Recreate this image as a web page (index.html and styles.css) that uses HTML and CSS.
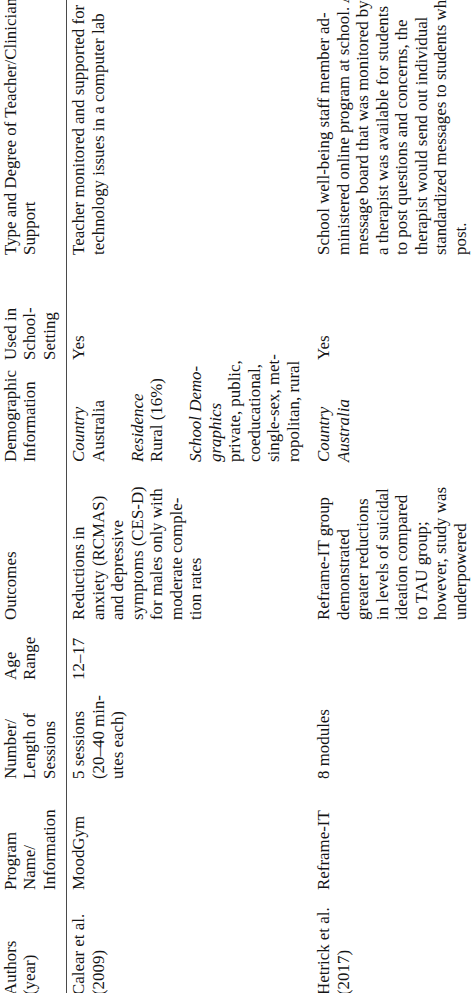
FILE: index.html
```html
<!DOCTYPE html>
<html lang="en">
<head>
<meta charset="utf-8">
<title>Table</title>
<link rel="stylesheet" href="styles.css">
</head>
<body>
<div class="page">
  <div class="sheet">
    <div class="tbl">
      <div class="th">Authors<br>(year)</div>
      <div class="th">Program<br>Name/<br>Information</div>
      <div class="th">Number/<br>Length of<br>Sessions</div>
      <div class="th">Age<br>Range</div>
      <div class="th">Outcomes</div>
      <div class="th">Demographic<br>Information</div>
      <div class="th">Used in<br>School-<br>Setting</div>
      <div class="th">Type and Degree of Teacher/Clinician<br>Support</div>

      <div class="td r1">Calear et al.<br>(2009)</div>
      <div class="td r1">MoodGym</div>
      <div class="td r1">5 sessions<br>(20–40 min-<br>utes each)</div>
      <div class="td r1">12–17</div>
      <div class="td r1">Reductions in<br>anxiety (RCMAS)<br>and depressive<br>symptoms (CES-D)<br>for males only with<br>moderate comple-<br>tion rates</div>
      <div class="td r1"><i>Country</i><br>Australia<br>&nbsp;<br><i>Residence</i><br>Rural (16%)<br>&nbsp;<br><i>School Demo-</i><br><i>graphics</i><br>private, public,<br>coeducational,<br>single-sex, met-<br>ropolitan, rural</div>
      <div class="td r1">Yes</div>
      <div class="td r1">Teacher monitored and supported for<br>technology issues in a computer lab</div>

      <div class="td r2">Hetrick et al.<br>(2017)</div>
      <div class="td r2">Reframe-IT</div>
      <div class="td r2">8 modules</div>
      <div class="td r2"></div>
      <div class="td r2">Reframe-IT group<br>demonstrated<br>greater reductions<br>in levels of suicidal<br>ideation compared<br>to TAU group;<br>however, study was<br>underpowered</div>
      <div class="td r2"><i>Country</i><br><i>Australia</i></div>
      <div class="td r2">Yes</div>
      <div class="td r2">School well-being staff member ad-<br>ministered online program at school. A<br>message board that was monitored by<br>a therapist was available for students<br>to post questions and concerns, the<br>therapist would send out individual<br>standardized messages to students who<br>post.</div>
    </div>
  </div>
</div>
</body>
</html>
```

FILE: styles.css
```css
html, body {
  margin: 0;
  padding: 0;
  background: #ffffff;
}

.page {
  width: 474px;
  height: 993px;
  overflow: hidden;
  background: #ffffff;
}

.sheet {
  width: 1100px;
  transform-origin: 0 0;
  transform: translateY(993px) rotate(-90deg);
  font-family: "Liberation Serif", "Times New Roman", serif;
  font-size: 16.9px;
  line-height: 19.5px;
  color: #141414;
}

.tbl {
  display: grid;
  grid-template-columns: 105px 111px 99px 60px 158px 102px 105px 320px;
  margin-left: -2px;
}

.th,
.td {
  white-space: nowrap;
}

.th {
  padding-top: 0.5px;
  padding-bottom: 7px;
  border-bottom: 1px solid #4a4a4a;
}

.td.r1 {
  padding-top: 2px;
}

.td.r2 {
  padding-top: 11px;
}
```
